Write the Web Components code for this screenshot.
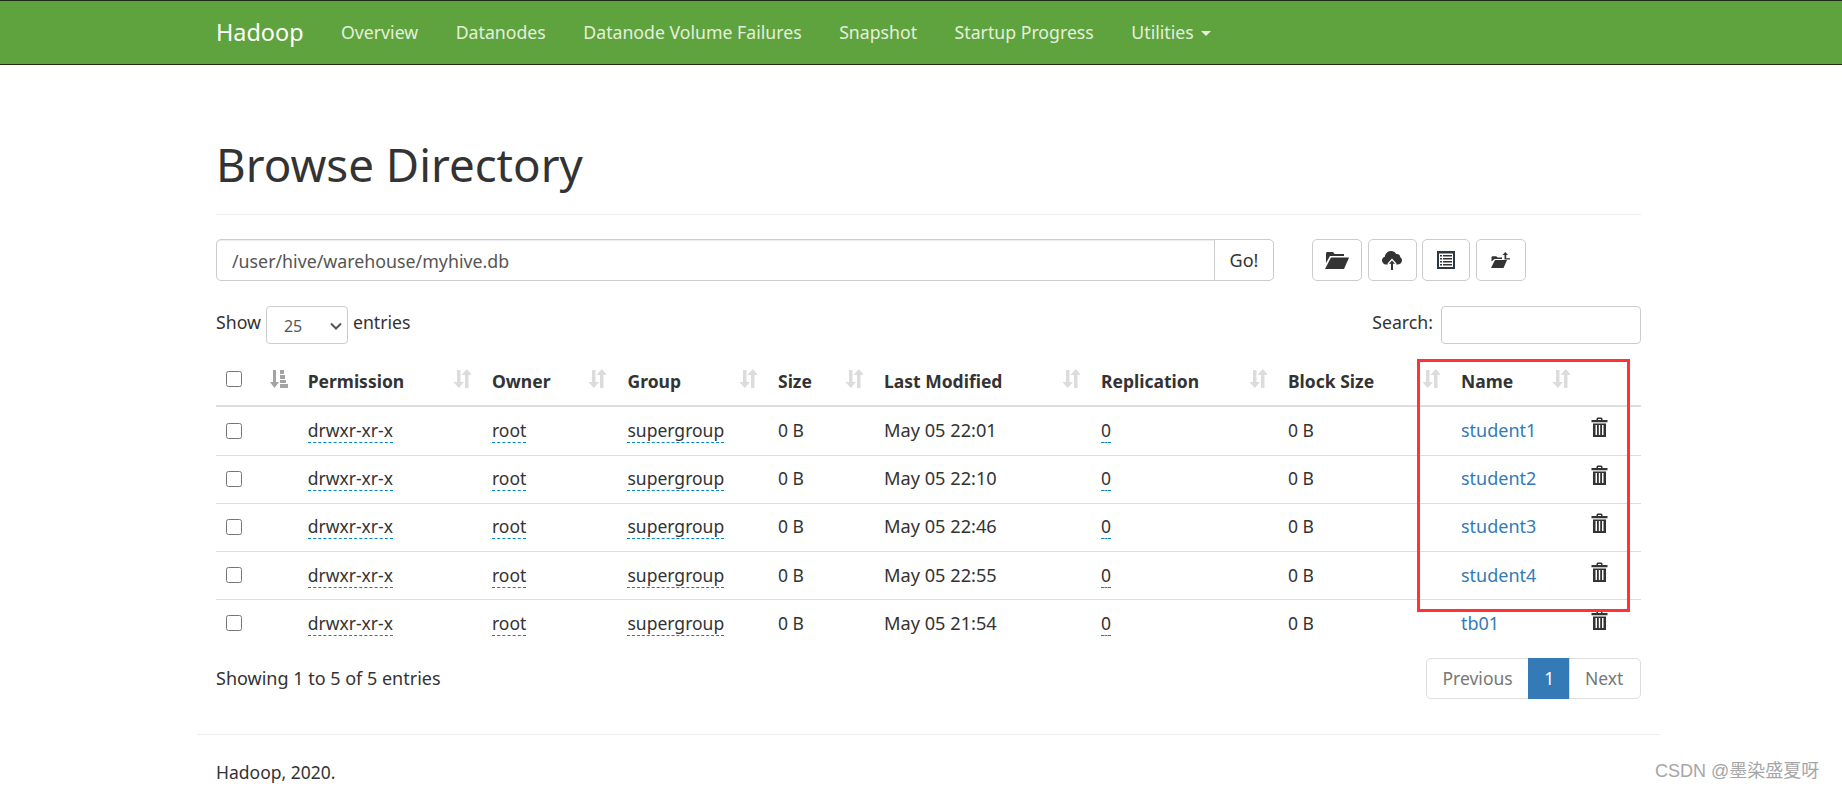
<!DOCTYPE html>
<html lang="en">
<head>
<meta charset="utf-8">
<title>Browsing HDFS</title>
<style>
  html, body { margin: 0; padding: 0; background: #fff; }
  body {
    font-family: "Noto Sans", "Noto Sans CJK SC", sans-serif;
    font-size: 17.5px;
    color: #333;
    height: 789px;
    overflow: hidden;
    position: relative;
  }
</style>
</head>
<body>
<hadoop-nav></hadoop-nav>
<page-wrap>
  <page-title>Browse Directory</page-title>
  <path-bar path="/user/hive/warehouse/myhive.db"></path-bar>
  <table-controls></table-controls>
  <file-head></file-head>
  <file-row mtime="May 05 22:01" name="student1"></file-row>
  <file-row mtime="May 05 22:10" name="student2"></file-row>
  <file-row mtime="May 05 22:46" name="student3"></file-row>
  <file-row mtime="May 05 22:55" name="student4"></file-row>
  <file-row mtime="May 05 21:54" name="tb01" last></file-row>
  <table-info></table-info>
</page-wrap>
<page-footer>Hadoop, 2020.</page-footer>
<red-mark></red-mark>
<water-mark>CSDN @墨染盛夏呀</water-mark>

<script>
const COLS = "81.7px 184.3px 135.5px 150.5px 106px 217px 187px 173px 130px 60.8px";

const sortIcon = /*html*/`<svg class="sort" width="18" height="19" viewBox="0 0 18 19" fill="currentColor">
  <path d="M4 1h3.500v12H11l-5.250 6L.5 13H4z"/><path d="M12 6h3.500V19H12z"/><path d="M13.750 0L19 6h-10.500z"/></svg>`;

const sortAttrIcon = /*html*/`<svg class="sort on" width="18" height="19" viewBox="0 0 18 19" fill="currentColor">
  <path d="M3 1h3v12h3l-4.500 6L0 13h3z"/><path d="M10 1h4v4h-4zM10 6h5v4h-5zM10 11h6v3h-6zM10 15h8v4h-8z"/></svg>`;

class HadoopNav extends HTMLElement {
    constructor() {
        super();
        this.attachShadow({ mode: "open" }).innerHTML = /*html*/`
        <style>
            :host {
                display: flex;
                box-sizing: border-box;
                height: 65px;
                padding-left: 197.25px;
                padding-bottom: 2px;
                background: #5fa33e;
                border-top: 1px solid #1c2c12;
                border-bottom: 1px solid #1c2c12;
                align-items: center;
                font-size: 17.700px;
            }
            a { color: #e4efdd; text-decoration: none; padding: 0 18.750px; white-space: nowrap; }
            .brand { color: #fff; font-size: 23.400px; padding-right: 18.750px; }
            .caret {
                display: inline-block;
                margin-left: 2.500px;
                vertical-align: middle;
                border-top: 5px solid #e4efdd;
                border-left: 5px solid transparent;
                border-right: 5px solid transparent;
            }
        </style>
        <a class="brand" href="#">Hadoop</a>
        <a href="#">Overview</a>
        <a href="#">Datanodes</a>
        <a href="#">Datanode Volume Failures</a>
        <a href="#">Snapshot</a>
        <a href="#">Startup Progress</a>
        <a href="#">Utilities <span class="caret"></span></a>`;
    }
}
customElements.define("hadoop-nav", HadoopNav);

class PageWrap extends HTMLElement {
    constructor() {
        super();
        this.attachShadow({ mode: "open" }).innerHTML = /*html*/`
        <style>
            :host { display: block; width: 1425px; margin-left: 216px; }
        </style>
        <slot></slot>`;
    }
}
customElements.define("page-wrap", PageWrap);

class PageTitle extends HTMLElement {
    constructor() {
        super();
        this.attachShadow({ mode: "open" }).innerHTML = /*html*/`
        <style>
            :host { display: block; margin-top: 71.700px; padding-bottom: 23.300px; border-bottom: 1.250px solid #eee; }
            h1 { margin: 0; font-size: 45.700px; font-weight: 400; line-height: 54px; color: #333; }
        </style>
        <h1><slot></slot></h1>`;
    }
}
customElements.define("page-title", PageTitle);

class PathBar extends HTMLElement {
    constructor() {
        super();
        this.attachShadow({ mode: "open" }).innerHTML = /*html*/`
        <style>
            :host { display: flex; margin-top: 24px; height: 42px; }
            .group { display: flex; width: 1058px; margin-right: 38px; }
            .field {
                flex: 1;
                box-sizing: border-box;
                border: 1.250px solid #ccc;
                border-radius: 5px 0 0 5px;
                box-shadow: inset 0 1px 1px rgba(0,0,0,.075);
                padding: 2px 15px 0;
                line-height: 39px;
                color: #555;
                font-size: 17.800px;
            }
            .go {
                box-sizing: border-box;
                width: 60px;
                border: 1.250px solid #ccc;
                margin-left: -1.250px;
                border-radius: 0 5px 5px 0;
                text-align: center;
                line-height: 39px;
                padding-top: 1px;
                font-size: 18px;
            }
            .tools { display: flex; gap: 5.600px; }
            .tool {
                box-sizing: border-box;
                width: 50px;
                height: 42px;
                border: 1.250px solid #ccc;
                border-radius: 5px;
                display: flex;
                align-items: center;
                justify-content: center;
                color: #333;
            }
            .tool.narrow { width: 49px; }
            svg { display: block; }
        </style>
        <div class="group">
            <div class="field">${this.getAttribute("path")}</div>
            <div class="go">Go!</div>
        </div>
        <div class="tools">
            <div class="tool">
                <svg width="24" height="18" viewBox="0 0 24 18" fill="#333">
                    <path d="M1 12V2l1-1h6l1.500 2H19v2H5z"/><path d="M6 6.500h18L19 18H0z"/>
                </svg>
            </div>
            <div class="tool narrow">
                <svg width="20" height="20" viewBox="0 0 20 20" fill="#333">
                    <path d="M4 14.500C1.800 14.500 0 12.800 0 10.500c0-1.800 1.100-3.200 2.800-3.700C3.200 3.500 5.700 1 9 1c2.300 0 4.200 1.200 5.200 3 .3 0 .5 0 .8 0 2 0 3.300 1.600 3.300 3.300 1 .6 1.700 1.700 1.700 3 0 2.200-1.700 4.200-4 4.200h-1.500L10 9.500 5.500 14.500z"/>
                    <path d="M10 8.500l-4.800 5.300h3.300V20h3v-6.200h3.300z" fill="#fff"/>
                    <path d="M10 10.500l-3 3.300h2V20h2v-6.200h2z"/>
                </svg>
            </div>
            <div class="tool narrow" style="width:48px">
                <svg width="18" height="18" viewBox="0 0 18 18">
                    <path d="M0 0h18v18H0z" fill="#2b3640"/>
                    <path d="M2 2.500h14V16H2z" fill="#fff"/>
                    <path d="M3 4h2v1.500H3zM6 4h9v1.500H6zM3 7h2v1.500H3zM6 7h9v1.500H6zM3 10h2v1.500H3zM6 10h9v1.500H6zM3 13h2v1.500H3zM6 13h9v1.500H6z" fill="#333"/>
                </svg>
            </div>
            <div class="tool">
                <svg width="20" height="16" viewBox="0 0 20 16" fill="#333">
                    <path d="M.5 9.500V5l.8-.8h4L6.500 5.500H11V7H3.500z"/><path d="M4 8h12l-3.500 8H0z"/>
                    <path d="M14.300 0l2.700 3h-1.800v3.200H19v1.300h-5.500V3h-1.900z"/>
                </svg>
            </div>
        </div>`;
    }
}
customElements.define("path-bar", PathBar);

class TableControls extends HTMLElement {
    constructor() {
        super();
        this.attachShadow({ mode: "open" }).innerHTML = /*html*/`
        <style>
            :host { display: flex; justify-content: space-between; margin-top: 25px; height: 38px; font-size: 17.700px; }
            .left, .right { display: flex; align-items: flex-start; }
            .pick { position: relative; width: 82px; height: 38px; margin: 0 5px; }
            select {
                appearance: none;
                display: block;
                box-sizing: border-box;
                width: 100%;
                height: 38px;
                font: 16px "Noto Sans", sans-serif;
                color: #555;
                background: #fff;
                border: 1.250px solid #ccc;
                border-radius: 4px;
                padding: 3px 0 0 17px;
            }
            .pick svg { position: absolute; right: 6px; top: 16px; pointer-events: none; }
            .search {
                box-sizing: border-box;
                width: 200px;
                height: 38px;
                border: 1.250px solid #ccc;
                border-radius: 4px;
                margin-left: 8px;
            }
            .txt { line-height: 33px; }
        </style>
        <div class="left">
            <span class="txt">Show</span>
            <div class="pick">
                <select><option>25</option></select>
                <svg width="12" height="8" viewBox="0 0 12 8" fill="none" stroke="#555" stroke-width="2"><path d="M1 1.500l5 5 5-5"/></svg>
            </div>
            <span class="txt">entries</span>
        </div>
        <div class="right">
            <span class="txt">Search:</span>
            <div class="search"></div>
        </div>`;
    }
}
customElements.define("table-controls", TableControls);

class FileHead extends HTMLElement {
    constructor() {
        super();
        const titles = ["Permission", "Owner", "Group", "Size", "Last Modified", "Replication", "Block Size", "Name"];
        this.attachShadow({ mode: "open" }).innerHTML = /*html*/`
        <style>
            :host {
                display: grid;
                grid-template-columns: ${COLS};
                height: 63.500px;
                box-sizing: border-box;
                border-bottom: 2.500px solid #ddd;
                align-items: center;
                font-weight: 700;
            }
            .cell { position: relative; padding-left: 10px; white-space: nowrap; height: 100%; display: flex; align-items: center; padding-top: 13.500px; box-sizing: border-box; }
            .sort { position: absolute; right: 11px; top: 25px; color: #dcdcdc; }
            .sort.on { color: #a3a3a3; right: 10px; }
            input { width: 16px; height: 16px; margin: 0; }
        </style>
        <div class="cell"><input type="checkbox" style="margin-top:-4px">${sortAttrIcon}</div>
        ${titles.map(t => `<div class="cell">${t}${sortIcon}</div>`).join("")}
        <div class="cell"></div>`;
    }
}
customElements.define("file-head", FileHead);

class FileRow extends HTMLElement {
    constructor() {
        super();
        const tip = (text) => `<span class="tip">${text}</span>`;
        this.attachShadow({ mode: "open" }).innerHTML = /*html*/`
        <style>
            :host {
                display: grid;
                grid-template-columns: ${COLS};
                height: 48.200px;
                box-sizing: border-box;
                border-bottom: 1.250px solid #ddd;
                padding-bottom: 2px;
                align-items: center;
            }
            :host([last]) { border-bottom: 0; padding-bottom: 3.250px; }
            .cell { padding-left: 10px; white-space: nowrap; }
            .tip { border-bottom: 1.250px dashed #08c; }
            a { color: #337ab7; text-decoration: none; font-size: 18px; }
            .time { font-size: 18.200px; }
            input { width: 16px; height: 16px; margin: 1px 0 0; display: block; }
            svg { display: block; margin: -6px 0 0 0; }
        </style>
        <div class="cell"><input type="checkbox"></div>
        <div class="cell">${tip("drwxr-xr-x")}</div>
        <div class="cell">${tip("root")}</div>
        <div class="cell">${tip("supergroup")}</div>
        <div class="cell">0 B</div>
        <div class="cell time">${this.getAttribute("mtime")}</div>
        <div class="cell">${tip("0")}</div>
        <div class="cell">0 B</div>
        <div class="cell"><a href="#">${this.getAttribute("name")}</a></div>
        <div class="cell">
            <svg width="17" height="20" viewBox="0 0 17 20" fill="#333">
                <path d="M5.500 3V1.500L6.500.5h4l1 1V3h5v2.200H.5V3zM7 3h3V2H7z" fill-rule="evenodd"/>
                <path fill-rule="evenodd" d="M2 6.500h13V20H2zM4.500 8v10H6V8zM7.800 8v10h1.400V8zM11 8v10h1.500V8z"/>
            </svg>
        </div>`;
    }
}
customElements.define("file-row", FileRow);

class TableInfo extends HTMLElement {
    constructor() {
        super();
        this.attachShadow({ mode: "open" }).innerHTML = /*html*/`
        <style>
            :host { display: flex; justify-content: space-between; align-items: flex-start; margin-top: 10px; }
            .info { line-height: 41px; font-size: 18px; }
            ul { display: flex; margin: 0; padding: 0; list-style: none; height: 41px; box-sizing: border-box; }
            li { box-sizing: border-box; border: 1.250px solid #ddd; padding: 0 15px; line-height: 38px; color: #777; margin-left: -1.250px; }
            li:first-child { border-radius: 5px 0 0 5px; width: 104px; padding-left: 16px; }
            li:last-child { border-radius: 0 5px 5px 0; width: 72px; }
            li.active { background: #337ab7; border-color: #337ab7; color: #fff; width: 42px; padding: 0; text-align: center; }
        </style>
        <div class="info">Showing 1 to 5 of 5 entries</div>
        <ul>
            <li>Previous</li>
            <li class="active">1</li>
            <li>Next</li>
        </ul>`;
    }
}
customElements.define("table-info", TableInfo);

class PageFooter extends HTMLElement {
    constructor() {
        super();
        this.attachShadow({ mode: "open" }).innerHTML = /*html*/`
        <style>
            :host {
                display: block;
                box-sizing: border-box;
                width: 1462.500px;
                margin: 35px 0 0 197.250px;
                padding: 25px 18.750px 0;
                border-top: 1.250px solid #eee;
            }
        </style>
        <slot></slot>`;
    }
}
customElements.define("page-footer", PageFooter);

class RedMark extends HTMLElement {
    constructor() {
        super();
        this.attachShadow({ mode: "open" }).innerHTML = /*html*/`
        <style>
            :host {
                position: absolute;
                left: 1417px;
                top: 359px;
                width: 213px;
                height: 253px;
                box-sizing: border-box;
                border: 3px solid #ff3336;
                pointer-events: none;
            }
        </style>`;
    }
}
customElements.define("red-mark", RedMark);

class WaterMark extends HTMLElement {
    constructor() {
        super();
        this.attachShadow({ mode: "open" }).innerHTML = /*html*/`
        <style>
            :host {
                position: absolute;
                left: 1655px;
                top: 760px;
                font: 18px "Liberation Sans", "Noto Sans CJK SC", sans-serif;
                line-height: 22px;
                color: #a6a6a6;
                white-space: nowrap;
            }
        </style>
        <slot></slot>`;
    }
}
customElements.define("water-mark", WaterMark);
</script>
</body>
</html>
